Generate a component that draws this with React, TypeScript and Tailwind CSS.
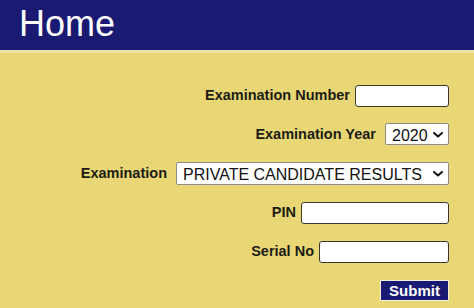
import React from 'react';

const Chevron: React.FC = () => (
  <svg viewBox="0 0 10 6" className="pointer-events-none absolute right-[6px] top-1/2 h-[6px] w-[10px] -translate-y-1/2">
    <path d="M1 1l4 3.5L9 1" fill="none" stroke="#111" strokeWidth="2" strokeLinecap="round" strokeLinejoin="round" />
  </svg>
);

const Row: React.FC<{ label: string; gap?: string; children: React.ReactNode }> = ({ label, gap = 'gap-[5px]', children }) => (
  <div className={`flex h-[22px] items-center ${gap}`}>
    <span className="text-[14.5px] font-bold text-[#1c1c14]">{label}</span>
    {children}
  </div>
);

export default function App() {
  return (
    <div className="h-[308px] w-[474px] overflow-hidden bg-[#e8d774] font-['Liberation_Sans',Arial,sans-serif]">
      <header className="flex h-[53px] items-center border-b-[3px] border-[#ece2a6] bg-[#1b1a73] pl-[19px]">
        <h1 className="-mt-[2px] text-[36px] leading-none text-white">Home</h1>
      </header>
      <form className="flex flex-col items-end gap-[17px] pr-[25px] pt-[32px]" onSubmit={e => e.preventDefault()}>
        <Row label="Examination Number">
          <input type="text" className="h-[22px] w-[94px] rounded-[3px] border border-[#3a3a34] bg-white" />
        </Row>
        <Row label="Examination Year" gap="gap-[9px]">
          <div className="relative">
            <select defaultValue="2020" className="h-[22px] w-[64px] appearance-none rounded-[2px] border border-[#8c8c86] bg-white pl-[6px] text-[16px] text-[#111]">
              <option>2020</option>
            </select>
            <Chevron />
          </div>
        </Row>
        <Row label="Examination" gap="gap-[9px]">
          <div className="relative">
            <select className="h-[23px] w-[273px] appearance-none rounded-[2px] border border-[#8c8c86] bg-white pl-[6px] text-[16px] text-[#111]">
              <option>PRIVATE CANDIDATE RESULTS</option>
            </select>
            <Chevron />
          </div>
        </Row>
        <Row label="PIN">
          <input type="text" className="h-[22px] w-[148px] rounded-[3px] border border-[#3a3a34] bg-white" />
        </Row>
        <Row label="Serial No">
          <input type="text" className="h-[22px] w-[130px] rounded-[3px] border border-[#3a3a34] bg-white" />
        </Row>
        <button type="submit" className="h-[21px] w-[69px] border border-[#f4f0e0] bg-[#1b1a73] text-[15px] font-bold leading-none text-white">
          Submit
        </button>
      </form>
    </div>
  );
}
